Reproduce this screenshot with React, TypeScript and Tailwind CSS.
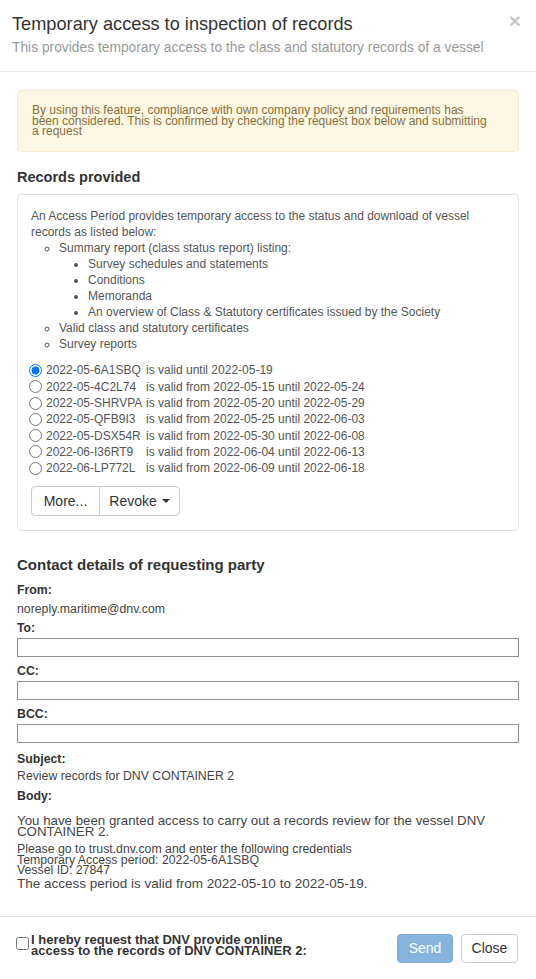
import { useState } from "react";

interface Period {
  id: string;
  text: string;
}

const periods: Period[] = [
  { id: "2022-05-6A1SBQ", text: "is valid until 2022-05-19" },
  { id: "2022-05-4C2L74", text: "is valid from 2022-05-15 until 2022-05-24" },
  { id: "2022-05-SHRVPA", text: "is valid from 2022-05-20 until 2022-05-29" },
  { id: "2022-05-QFB9I3", text: "is valid from 2022-05-25 until 2022-06-03" },
  { id: "2022-05-DSX54R", text: "is valid from 2022-05-30 until 2022-06-08" },
  { id: "2022-06-I36RT9", text: "is valid from 2022-06-04 until 2022-06-13" },
  { id: "2022-06-LP772L", text: "is valid from 2022-06-09 until 2022-06-18" },
];

function Field({ label, className = "" }: { label: string; className?: string }) {
  return (
    <div className={className}>
      <div className="text-[12.3px] leading-[16px] font-bold text-[#333]">{label}</div>
      <input
        type="text"
        className="mt-[2px] block w-full h-[19px] border border-[#8f8f8f] bg-white"
      />
    </div>
  );
}

export default function App() {
  const [selected, setSelected] = useState(periods[0].id);
  const [agreed, setAgreed] = useState(false);

  return (
    <div className="w-[536px] min-h-[979px] bg-white font-['Liberation_Sans',Arial,sans-serif] text-[#333]">
      {/* header */}
      <div className="flex items-start justify-between pl-[12px] pr-[15px] pt-[13px] pb-[14px] border-b border-[#e5e5e5]">
        <div>
          <h4 className="text-[18.2px] leading-[22px] text-[#333]">
            Temporary access to inspection of records
          </h4>
          <p className="mt-[4px] text-[13.8px] leading-[18px] text-[#999]">
            This provides temporary access to the class and statutory records of a vessel
          </p>
        </div>
        <button className="mt-[-4px] text-[21px] leading-[24px] font-bold text-[#c8c8c8]">×</button>
      </div>

      {/* body */}
      <div className="px-[17px] pt-[18px] pb-[27px]">
        <div className="rounded-[4px] border border-[#faebcc] bg-[#fcf8e3] pl-[14px] pr-[28px] py-[14px] text-[12px] leading-[10.5px] text-[#8a6d3b]">
          By using this feature, compliance with own company policy and requirements has been
          considered. This is confirmed by checking the request box below and submitting a request
        </div>

        <h5 className="mt-[16px] text-[14.5px] leading-[18px] font-bold text-[#333]">Records provided</h5>

        <div className="mt-[8px] rounded-[4px] border border-[#e3e3e3] bg-white pl-[13px] pr-[13px] pt-[13px] pb-[14px] text-[12px] leading-[16.1px] text-[#555]">
          <p>
            An Access Period provides temporary access to the status and download of vessel records
            as listed below:
          </p>
          <ul className="list-[circle] pl-[28px]">
            <li>
              Summary report (class status report) listing:
              <ul className="list-disc pl-[29px]">
                <li>Survey schedules and statements</li>
                <li>Conditions</li>
                <li>Memoranda</li>
                <li>An overview of Class &amp; Statutory certificates issued by the Society</li>
              </ul>
            </li>
            <li>Valid class and statutory certificates</li>
            <li>Survey reports</li>
          </ul>

          <div className="mt-[10px]">
            {periods.map((p) => (
              <label key={p.id} className="flex items-center h-[16.3px]">
                <input
                  type="radio"
                  name="period"
                  checked={selected === p.id}
                  onChange={() => setSelected(p.id)}
                  className="ml-[-2px] w-[13px] h-[13px]"
                />
                <span className="ml-[4px] inline-block w-[100px] whitespace-nowrap">{p.id}</span>
                <span className="whitespace-nowrap">{p.text}</span>
              </label>
            ))}
          </div>

          <div className="mt-[10px] flex">
            <button className="h-[30px] w-[69px] rounded-l-[4px] border border-[#ccc] bg-white text-[14px] text-[#333]">
              More...
            </button>
            <button className="h-[30px] w-[81px] -ml-px rounded-r-[4px] border border-[#ccc] bg-white text-[14px] text-[#333] flex items-center justify-center">
              Revoke
              <span className="ml-[5px] inline-block w-0 h-0 border-x-[4px] border-t-[4px] border-x-transparent border-t-[#333]" />
            </button>
          </div>
        </div>

        <h5 className="mt-[24px] text-[15px] leading-[20px] font-bold text-[#333]">
          Contact details of requesting party
        </h5>

        <div className="mt-[7px] text-[12.3px] leading-[16px] font-bold">From:</div>
        <div className="mt-[3px] text-[12.3px] leading-[16px] text-[#444]">noreply.maritime@dnv.com</div>

        <Field label="To:" className="mt-[3px]" />
        <Field label="CC:" className="mt-[6px]" />
        <Field label="BCC:" className="mt-[6px]" />

        <div className="mt-[8px] text-[12.3px] leading-[16px] font-bold">Subject:</div>
        <div className="mt-[1px] text-[12.3px] leading-[16px] text-[#444]">Review records for DNV CONTAINER 2</div>

        <div className="mt-[4px] text-[12.3px] leading-[16px] font-bold">Body:</div>
        <div className="text-[#444]">
          <p className="mt-[11px] text-[13.3px] leading-[11px]">
            You have been granted access to carry out a records review for the vessel DNV CONTAINER 2.
          </p>
          <p className="mt-[7px] text-[12.3px] leading-[10.5px]">
            Please go to trust.dnv.com and enter the following credentials
            <br />
            Temporary Access period: 2022-05-6A1SBQ
            <br />
            Vessel ID: 27847
          </p>
          <p className="mt-[2px] text-[13.5px] leading-[11px]">
            The access period is valid from 2022-05-10 to 2022-05-19.
          </p>
        </div>
      </div>

      {/* footer */}
      <div className="flex items-start justify-between border-t border-[#e5e5e5] pl-[16px] pr-[18px] pt-[17px] pb-[16px]">
        <label className="flex items-start">
          <input
            type="checkbox"
            checked={agreed}
            onChange={(e) => setAgreed(e.target.checked)}
            className="mt-[3px] w-[13px] h-[13px]"
          />
          <span className="ml-[2px] text-[13px] leading-[11px] font-bold text-[#333]">
            I hereby request that DNV provide online
            <br />
            access to the records of DNV CONTAINER 2:
          </span>
        </label>
        <div className="flex gap-[8px]">
          <button
            disabled={!agreed}
            className="h-[29px] w-[56px] rounded-[4px] border border-[#7dadd7] bg-[#85b5de] text-[14px] text-white"
          >
            Send
          </button>
          <button className="h-[29px] w-[57px] rounded-[4px] border border-[#ccc] bg-white text-[14px] text-[#333]">
            Close
          </button>
        </div>
      </div>
    </div>
  );
}
